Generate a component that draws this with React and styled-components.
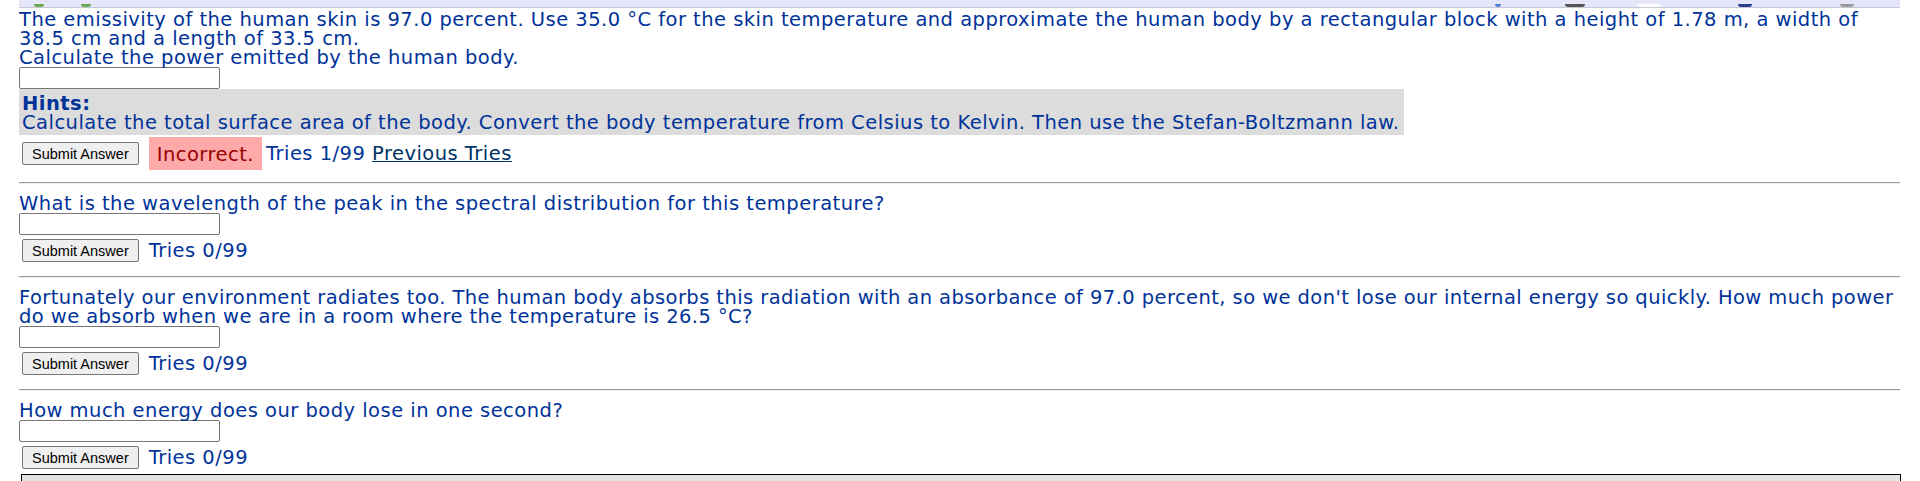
import React from "react";
import styled, { createGlobalStyle } from "styled-components";

const GlobalStyle = createGlobalStyle`
  html, body {
    margin: 0;
    overflow: hidden;
    background: #ffffff;
  }
  body {
    font-family: "DejaVu Sans", Verdana, sans-serif;
  }
`;

const Page = styled.div`
  padding: 0 20px 0 19px;
  color: #003399;
  font-size: 19.5px;
  line-height: 19px;
  letter-spacing: 0.47px;
`;

const TopBar = styled.div`
  height: 7px;
  background: #e6e6fa;
  border-bottom: 1px solid #c8c8d4;
  display: flex;
  align-items: flex-end;
  overflow: hidden;
`;

const BarIcon = styled.span`
  display: block;
  flex: none;
  width: ${(p) => p.w}px;
  height: 3px;
  margin-left: ${(p) => p.at}px;
  border-radius: 0 0 4px 4px;
  background: ${(p) => p.color};
`;

const Question = styled.div`
  margin-top: ${(p) => p.top || 0}px;
  letter-spacing: ${(p) => (p.spacing != null ? `${p.spacing}px` : "inherit")};
`;

const AnswerInput = styled.input`
  display: block;
  box-sizing: border-box;
  width: 201px;
  height: 22px;
  margin: 0;
  border: 1px solid #767676;
  border-radius: 2px;
  background: #fff;
`;

const Hints = styled.div`
  width: fit-content;
  padding: 5px 4px 3px 3px;
  background: #dcdcdc;
`;

const HintTitle = styled.b`
  font-weight: bold;
`;

const Row = styled.div`
  display: flex;
  align-items: center;
  min-height: 27px;
  margin-top: 2px;
`;

const SubmitButton = styled.button`
  box-sizing: border-box;
  height: 23px;
  margin: 0 0 0 3px;
  padding: 0 9px;
  border: 1px solid #767676;
  border-radius: 2px;
  background: #efefef;
  color: #000;
  font-family: "Liberation Sans", Arial, sans-serif;
  font-size: 14.5px;
  line-height: 16px;
  letter-spacing: 0;
`;

const Status = styled.span`
  display: flex;
  align-items: center;
  margin-left: 10px;
  white-space: pre;
`;

const Verdict = styled.span`
  display: inline-block;
  padding: 8px 8px 6px 8px;
  margin-right: 4px;
  background: #ffaaaa;
  color: #990000;
`;

const TriesLink = styled.a`
  color: #003366;
  text-decoration: underline;
  cursor: pointer;
`;

const Divider = styled.hr`
  margin: 12px 0 10px 0;
  border: none;
  border-top: 1px solid #9a9a9a;
  border-bottom: 1px solid #eeeeee;
  height: 0;
`;

const BottomBox = styled.div`
  margin: 3px -1px 0 2px;
  height: 12px;
  border: 1px solid #000;
  background: #e4e4e4;
`;

const SubmitRow = ({ verdict, tries }) => (
  <Row>
    <SubmitButton type="button">Submit Answer</SubmitButton>
    <Status>
      {verdict && <Verdict>{verdict}</Verdict>}
      {`Tries ${tries}`}
      {verdict && (
        <>
          {" "}
          <TriesLink>Previous Tries</TriesLink>
        </>
      )}
    </Status>
  </Row>
);

export default function App() {
  return (
    <>
      <GlobalStyle />
      <Page>
        <TopBar>
          <BarIcon at={15} w={10} color="#6aa84f" />
          <BarIcon at={37} w={10} color="#6aa84f" />
          <BarIcon at={1404} w={6} color="#4a7fd8" />
          <BarIcon at={64} w={20} color="#555555" />
          <BarIcon at={53} w={23} color="#ffffff" />
          <BarIcon at={77} w={14} color="#2c3f8f" />
          <BarIcon at={88} w={14} color="#9a9a9a" />
        </TopBar>

        <Question top={2}>
          The emissivity of the human skin is 97.0 percent. Use 35.0 °C for the
          skin temperature and approximate the human body by a rectangular
          block with a height of 1.78 m, a width of 38.5 cm and a length of
          33.5 cm.
          <br />
          Calculate the power emitted by the human body.
        </Question>
        <AnswerInput type="text" />
        <Hints>
          <HintTitle>Hints:</HintTitle>
          <br />
          Calculate the total surface area of the body. Convert the body
          temperature from Celsius to Kelvin. Then use the Stefan-Boltzmann law.
        </Hints>
        <SubmitRow verdict="Incorrect." tries="1/99" />

        <Divider />

        <Question>
          What is the wavelength of the peak in the spectral distribution for
          this temperature?
        </Question>
        <AnswerInput type="text" />
        <SubmitRow tries="0/99" />

        <Divider />

        <Question spacing={0.42}>
          Fortunately our environment radiates too. The human body absorbs this
          radiation with an absorbance of 97.0 percent, so we don't lose our
          internal energy so quickly. How much power do we absorb when we are in
          a room where the temperature is 26.5 °C?
        </Question>
        <AnswerInput type="text" />
        <SubmitRow tries="0/99" />

        <Divider />

        <Question>How much energy does our body lose in one second?</Question>
        <AnswerInput type="text" />
        <SubmitRow tries="0/99" />

        <BottomBox />
      </Page>
    </>
  );
}
